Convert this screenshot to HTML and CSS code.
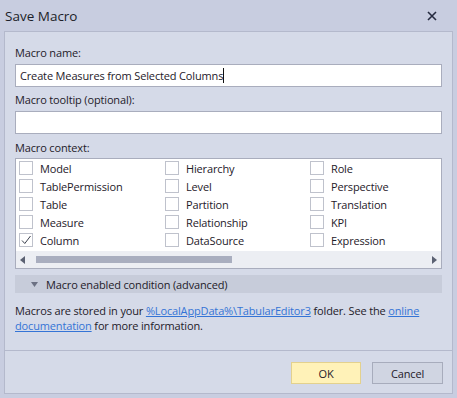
FILE: index.html
```html
<!DOCTYPE html>
<html lang="en">
<head>
    <meta charset="UTF-8">
    <title>Save Macro</title>
    <link rel="stylesheet" href="styles.css">
</head>
<body>
    <div class="window">
        <div class="titlebar">
            <span class="title">Save Macro</span>
            <svg class="close" width="10" height="10" viewBox="0 0 10 10">
                <path d="M1 1 L9 9 M9 1 L1 9" stroke="#262b40" stroke-width="1.6" fill="none"/>
            </svg>
        </div>

        <div class="panel">
            <div class="content">
                <div class="label first">Macro name:</div>
                <div class="input">Create Measures from Selected Columns<span class="caret"></span></div>

                <div class="label">Macro tooltip (optional):</div>
                <div class="input"></div>

                <div class="label ctx">Macro context:</div>
                <div class="listbox">
                    <div class="checks">
                        <div class="check"><span class="box"></span>Model</div>
                        <div class="check"><span class="box"></span>Hierarchy</div>
                        <div class="check"><span class="box"></span>Role</div>
                        <div class="check"><span class="box"></span>TablePermission</div>
                        <div class="check"><span class="box"></span>Level</div>
                        <div class="check"><span class="box"></span>Perspective</div>
                        <div class="check"><span class="box"></span>Table</div>
                        <div class="check"><span class="box"></span>Partition</div>
                        <div class="check"><span class="box"></span>Translation</div>
                        <div class="check"><span class="box"></span>Measure</div>
                        <div class="check"><span class="box"></span>Relationship</div>
                        <div class="check"><span class="box"></span>KPI</div>
                        <div class="check">
                            <span class="box">
                                <svg width="12" height="12" viewBox="0 0 12 12">
                                    <path d="M2 6.5 L4.8 9.5 L10.5 2" stroke="#3a3f4c" stroke-width="1" fill="none"/>
                                </svg>
                            </span>Column
                        </div>
                        <div class="check"><span class="box"></span>DataSource</div>
                        <div class="check"><span class="box"></span>Expression</div>
                    </div>
                    <div class="hscroll">
                        <svg class="arrow" width="5" height="8" viewBox="0 0 5 8"><path d="M5 0 L0 4 L5 8 Z" fill="#5b6172"/></svg>
                        <div class="track"><div class="thumb"></div></div>
                        <svg class="arrow" width="5" height="8" viewBox="0 0 5 8"><path d="M0 0 L5 4 L0 8 Z" fill="#5b6172"/></svg>
                    </div>
                </div>

                <div class="expander">
                    <svg width="7" height="5" viewBox="0 0 7 5"><path d="M0 0 L7 0 L3.5 5 Z" fill="#6c7183"/></svg>
                    <span>Macro enabled condition (advanced)</span>
                </div>

                <p class="info">Macros are stored in your <a href="#">%LocalAppData%\TabularEditor3</a> folder. See the <a href="#">online documentation</a> for more information.</p>
            </div>

            <div class="footer">
                <button class="btn ok">OK</button>
                <button class="btn">Cancel</button>
            </div>
        </div>
    </div>
</body>
</html>
```

FILE: styles.css
```css
* {
    box-sizing: border-box;
}
body {
    margin: 0;
    font-family: "Open Sans", "Noto Sans", sans-serif;
    font-size: 11px;
    letter-spacing: -0.15px;
    color: #1e2029;
    background-color: #c8cde0;
}
.window {
    width: 457px;
    height: 398px;
    display: flex;
    flex-direction: column;
    background-color: #c8cde0;
}
.titlebar {
    height: 31px;
    flex-shrink: 0;
    display: flex;
    align-items: center;
    justify-content: space-between;
    padding: 0 20px 0 5px;
}
.title {
    font-size: 13.5px;
    letter-spacing: 0;
    color: #1c1e28;
}
.close {
    margin-top: 1px;
}
.panel {
    flex: 1;
    margin: 0 4px 4px 4px;
    background-color: #d5dae8;
    border: 1px solid #b4b9cc;
    display: flex;
    flex-direction: column;
}
.content {
    padding: 0 10px;
}
.label {
    line-height: 16px;
    margin-top: 5px;
}
.label.first {
    margin-top: 13px;
}
.label.ctx {
    margin-top: 6px;
}
.input {
    margin-top: 3px;
    height: 23px;
    background-color: #fff;
    border: 1px solid #a9adbd;
    padding: 0 4px;
    line-height: 21px;
    display: flex;
    align-items: center;
}
.caret {
    display: inline-block;
    width: 1px;
    height: 15px;
    background-color: #111;
}
.listbox {
    margin-top: 2px;
    height: 111px;
    background-color: #fff;
    border: 1px solid #a9adbd;
}
.checks {
    display: grid;
    grid-template-columns: 146px 145px 1fr;
    grid-auto-rows: 18px;
    padding-left: 3px;
}
.check {
    display: flex;
    align-items: center;
    gap: 7px;
}
.box {
    width: 14px;
    height: 14px;
    border: 1px solid #bfc2cc;
    background-color: #fff;
    display: flex;
    align-items: center;
    justify-content: center;
}
.hscroll {
    margin-top: 2px;
    height: 17px;
    background-color: #eceef3;
    display: flex;
    align-items: center;
    padding: 0 4px;
}
.arrow {
    flex-shrink: 0;
}
.track {
    flex: 1;
    padding: 0 5px 0 11px;
}
.thumb {
    width: 196px;
    height: 7px;
    background-color: #a9aebf;
}
.expander {
    margin-top: 6px;
    height: 18px;
    background-color: #c7ccda;
    display: flex;
    align-items: center;
    gap: 8px;
    padding-left: 16px;
}
.info {
    margin: 10px 0 0 0;
    line-height: 15px;
}
.info a {
    color: #3474d6;
    text-decoration: underline;
}
.footer {
    margin-top: auto;
    height: 43px;
    border-top: 1px solid #b4b9cc;
    display: flex;
    justify-content: flex-end;
    gap: 11px;
    padding: 11px 9px 0 0;
}
.btn {
    width: 71px;
    height: 22px;
    font-family: inherit;
    font-size: 11px;
    letter-spacing: inherit;
    color: #1e2029;
    background-color: #d0d5e2;
    border: 1px solid #a7acbc;
    padding: 0;
}
.btn.ok {
    width: 70px;
    background-color: #fff2b8;
    border-color: #e3d18e;
}
```
